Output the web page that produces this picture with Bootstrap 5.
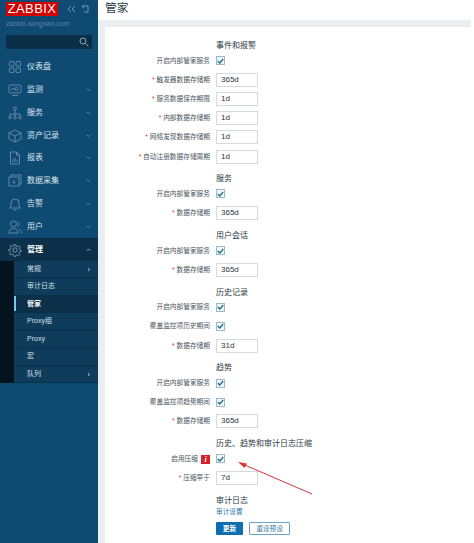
<!DOCTYPE html>
<html lang="zh">
<head>
  <meta charset="UTF-8">
  <title>管家</title>
  <link href="https://cdn.jsdelivr.net/npm/bootstrap@5.3.3/dist/css/bootstrap.min.css" rel="stylesheet">
  <style>
    html, body { height: 100%; overflow: hidden; }
    body {
      background: #ebeef0;
      font-family: "Liberation Sans", "Noto Sans CJK SC", sans-serif;
      font-size: 7px;
      color: #1f2c33;
      position: relative;
    }
    .side-bar { width: 98px; height: 543px; background: #0f4a72; color: #d8e4ec; flex: none; }
    .logo-row { height: 35px; padding: 2px 0 0 6px; }
    .logo-box {
      background: #d40000; color: #fff; width: 52px; height: 14px;
      font-size: 13px; line-height: 14px; text-align: center; letter-spacing: .4px;
    }
    .logo-tools { color: #6f97b2; margin-left: 9px; gap: 5px; }
    .host-name { color: #5a88a7; font-size: 6.8px; margin-top: 3px; height: 10px; line-height: 10px; }
    .search-box { background: #0b2e47; height: 14px; margin: 0 6px; border-radius: 1px; padding-right: 3px; }
    .side-gap { height: 6.800px; }
    .menu-item { height: 22.800px; color: #dbe6ed; font-size: 8px; padding-left: 8px; padding-right: 7px; }
    .menu-item svg.ico { width: 14px; height: 14px; margin-right: 5px; flex: none; stroke-width: .8; }
    .menu-item .chev { margin-left: auto; }
    .menu-open { background: #0c3049; color: #fff; font-weight: 700; }
    .sub-wrap { background: #04141f; padding-left: 14px; }
    .sub-item {
      height: 17.500px; background: #0f3c5b; color: #d5e2ea; font-size: 7px;
      padding: 0 7px 0 13px; border-bottom: 1px solid #0b2f48; position: relative;
    }
    .sub-item .chev { margin-left: auto; }
    .sub-active { background: #0c3049; color: #fff; font-weight: 700; }
    .sub-active::before {
      content: ""; position: absolute; left: 0; top: 0; bottom: 1px; width: 2px; background: #7cc4ee;
    }
    .main-col { border-right: 3px solid #fff; }
    .top-bar { height: 20px; background: #fff; font-size: 11.700px; line-height: 14px; padding: 1px 0 0 7px; color: #2b3a42; }
    .page-body { background: #fff; margin: 7px 0 0 7px; height: 516px; padding-top: 13px; }
    .form-row { display: grid; grid-template-columns: 105px 1fr; column-gap: 6px; align-items: center; height: 19.200px; }
    .form-row.head-row { height: 11px; margin-top: 7.250px; }
    .form-row.head-row:first-child { margin-top: 0; }
    .form-row.link-row { height: 13px; }
    .form-row label { text-align: right; color: #4a565d; font-size: 6.700px; white-space: nowrap; }
    .req { color: #d23c2e; }
    .sect-title { grid-column: 2; font-size: 8px; color: #2b3a42; white-space: nowrap; }
    .val-box {
      width: 42px; height: 14px; border: 1px solid #d5dadd; background: #fff;
      padding-left: 4px; font-size: 8px; line-height: 12px; color: #27343b;
    }
    .tick-box {
      width: 9px; height: 9px; border: 1px solid #9cb9cb; background: #f2f7fa;
      display: flex; align-items: center; justify-content: center;
    }
    .info-flag {
      display: inline-block; width: 9px; height: 9px; background: #d6202c; color: #fff;
      font: italic 700 8px/9px "Liberation Serif", serif; text-align: center; margin-left: 3px; vertical-align: -1px;
    }
    .audit-link { color: #1f78ae; font-size: 6.700px; grid-column: 2; }
    .act-row { grid-column: 2; gap: 6px; }
    .btn.btn-save {
      background: #0f6eb0; border: 0; color: #fff; font-size: 6.700px; line-height: 13.500px; padding: 0;
      width: 27px; height: 13.500px; border-radius: 1px; font-weight: 700;
    }
    .btn.btn-reset {
      background: #fff; border: 1px solid #6ba3c8; color: #3a7aa3; font-size: 6.700px; line-height: 11.500px; padding: 0;
      width: 41px; height: 13.500px; border-radius: 1px;
    }
    .red-arrow { position: absolute; left: 230px; top: 455px; width: 90px; height: 45px; }
  </style>
</head>
<body>
  <div class="d-flex">
    <aside class="side-bar">
      <div class="logo-row">
        <div class="d-flex align-items-center">
          <div class="logo-box">ZABBIX</div>
          <div class="logo-tools d-flex align-items-center">
            <svg width="9" height="8" viewBox="0 0 9 8" fill="none" stroke="currentColor"><path d="M4 1 1 4l3 3M8 1 5 4l3 3"/></svg>
            <svg width="8" height="8" viewBox="0 0 8 8" fill="none" stroke="currentColor"><path d="M2 1h5v6H3M3 0 1 1.500 3 3"/></svg>
          </div>
        </div>
        <div class="host-name">zabbix-songxwn.com</div>
      </div>
      <div class="search-box d-flex align-items-center justify-content-end">
        <svg width="10" height="10" viewBox="0 0 10 10" fill="none" stroke="#8fa9ba"><circle cx="4" cy="4" r="3"/><path d="m6.500 6.500 3 3"/></svg>
      </div>
      <div class="side-gap"></div>
      <div class="menu-item d-flex align-items-center">
        <svg class="ico" viewBox="0 0 14 14" fill="none" stroke="#6f9ab6"><rect x="1.500" y="1.500" width="4.500" height="4.500" rx=".8"/><rect x="8" y="1.500" width="4.500" height="4.500" rx=".8"/><rect x="1.500" y="8" width="4.500" height="4.500" rx=".8"/><rect x="8" y="8" width="4.500" height="4.500" rx=".8"/></svg>仪表盘
      </div>
      <div class="menu-item d-flex align-items-center">
        <svg class="ico" viewBox="0 0 14 14" fill="none" stroke="#6f9ab6"><rect x="1" y="2" width="12" height="8" rx="1"/><path d="M4 12.500h6M3 7l2-2 2 2"/><circle cx="8.500" cy="6" r="1.500"/></svg>监测
        <svg class="chev" width="5" height="4" viewBox="0 0 5 4" fill="none" stroke="#5f8bab"><path d="m1 1 1.500 1.500L4 1"/></svg>
      </div>
      <div class="menu-item d-flex align-items-center">
        <svg class="ico" viewBox="0 0 14 14" fill="none" stroke="#6f9ab6"><circle cx="7" cy="2.500" r="1.500"/><path d="M7 4v4M2 10V8h10v2M7 8v2"/><circle cx="2" cy="11.500" r="1.300"/><circle cx="7" cy="11.500" r="1.300"/><circle cx="12" cy="11.500" r="1.300"/></svg>服务
        <svg class="chev" width="5" height="4" viewBox="0 0 5 4" fill="none" stroke="#5f8bab"><path d="m1 1 1.500 1.500L4 1"/></svg>
      </div>
      <div class="menu-item d-flex align-items-center">
        <svg class="ico" viewBox="0 0 14 14" fill="none" stroke="#6f9ab6"><path d="M7 1 13 4v6l-6 3-6-3V4zM1 4l6 3 6-3M7 7v6"/></svg>资产记录
        <svg class="chev" width="5" height="4" viewBox="0 0 5 4" fill="none" stroke="#5f8bab"><path d="m1 1 1.500 1.500L4 1"/></svg>
      </div>
      <div class="menu-item d-flex align-items-center">
        <svg class="ico" viewBox="0 0 14 14" fill="none" stroke="#6f9ab6"><path d="M2.500 1h6l3 3v9h-9zM8.500 1v3h3M5 11V8M7 11V6.500M9 11V9"/></svg>报表
        <svg class="chev" width="5" height="4" viewBox="0 0 5 4" fill="none" stroke="#5f8bab"><path d="m1 1 1.500 1.500L4 1"/></svg>
      </div>
      <div class="menu-item d-flex align-items-center">
        <svg class="ico" viewBox="0 0 14 14" fill="none" stroke="#6f9ab6"><path d="M3 3V1h10v9h-2"/><rect x="1" y="3" width="10" height="9"/><path d="M6 6v3M4.500 8 6 9.500 7.500 8"/></svg>数据采集
        <svg class="chev" width="5" height="4" viewBox="0 0 5 4" fill="none" stroke="#5f8bab"><path d="m1 1 1.500 1.500L4 1"/></svg>
      </div>
      <div class="menu-item d-flex align-items-center">
        <svg class="ico" viewBox="0 0 14 14" fill="none" stroke="#6f9ab6"><path d="M1.500 11c1.500-1 1.500-2 1.500-5a4 4 0 0 1 8 0c0 3 0 4 1.500 5zM5.500 13h3"/></svg>告警
        <svg class="chev" width="5" height="4" viewBox="0 0 5 4" fill="none" stroke="#5f8bab"><path d="m1 1 1.500 1.500L4 1"/></svg>
      </div>
      <div class="menu-item d-flex align-items-center">
        <svg class="ico" viewBox="0 0 14 14" fill="none" stroke="#6f9ab6"><circle cx="5.500" cy="4" r="3"/><path d="M1 13c0-3 2-4.500 4.500-4.500S10 10 10 13zM9.500 1.500a3 3 0 0 1 0 5M11 9c1.500.5 2.500 2 2.500 4"/></svg>用户
        <svg class="chev" width="5" height="4" viewBox="0 0 5 4" fill="none" stroke="#5f8bab"><path d="m1 1 1.500 1.500L4 1"/></svg>
      </div>
      <div class="menu-item menu-open d-flex align-items-center">
        <svg class="ico" viewBox="0 0 14 14" fill="none" stroke="#8fb2c9"><circle cx="7" cy="7" r="2.200"/><path d="M6 1h2l.4 1.800 1.600.7 1.600-1 1.400 1.400-1 1.600.7 1.600L14 7.500v1l-1.800.4-.7 1.600 1 1.600-1.400 1.400-1.600-1-1.600.7L8 14H6l-.4-1.800-1.600-.7-1.600 1L1 11.100l1-1.600-.7-1.600L0 7.500v-1l1.800-.4.700-1.600-1-1.600L2.900 1.900l1.600 1 1.600-.7z" transform="translate(.7 .7) scale(.9)"/></svg>管理
        <svg class="chev" width="5" height="4" viewBox="0 0 5 4" fill="none" stroke="#a9c2d2"><path d="M1 2.500 2.500 1 4 2.500"/></svg>
      </div>
      <div class="sub-wrap">
        <div class="sub-item d-flex align-items-center">常规<svg class="chev" width="4" height="5" viewBox="0 0 4 5" fill="none" stroke="#a9c2d2"><path d="m1 1 1.500 1.500L1 4"/></svg></div>
        <div class="sub-item d-flex align-items-center">审计日志</div>
        <div class="sub-item sub-active d-flex align-items-center">管家</div>
        <div class="sub-item d-flex align-items-center">Proxy组</div>
        <div class="sub-item d-flex align-items-center">Proxy</div>
        <div class="sub-item d-flex align-items-center">宏</div>
        <div class="sub-item d-flex align-items-center">队列<svg class="chev" width="4" height="5" viewBox="0 0 4 5" fill="none" stroke="#a9c2d2"><path d="m1 1 1.500 1.500L1 4"/></svg></div>
      </div>
    </aside>
    <main class="main-col flex-grow-1">
      <div class="top-bar">管家</div>
      <div class="page-body">
        <div id="form-list"></div>
      </div>
    </main>
  </div>
  <svg class="red-arrow" viewBox="0 0 90 45" fill="none"><path d="M82 39 10 8" stroke="#d8363a" stroke-width="1"/><path d="M8 7 17 8.500 14.500 13z" fill="#d8363a"/></svg>
  <script src="https://cdn.jsdelivr.net/npm/bootstrap@5.3.3/dist/js/bootstrap.bundle.min.js"></script>
  <script>
    const tick = '<span class="tick-box"><svg width="7" height="6" viewBox="0 0 7 6" fill="none" stroke="#0f6e8c" stroke-width="1.200"><path d="m.8 3 2 2L6.200 1"/></svg></span>';
    const ON = '开启内部管家服务';
    const KEEP = '数据存储期';
    // [type, label, value]
    const rows = [
      ['h', '事件和报警'], ['c', ON],
      ['i', '触发器数据存储期', '365d'], ['i', '服务数据保存期限', '1d'], ['i', '内部数据存储期', '1d'],
      ['i', '网络发现数据存储期', '1d'], ['i', '自动注册数据存储周期', '1d'],
      ['h', '服务'], ['c', ON], ['i', KEEP, '365d'],
      ['h', '用户会话'], ['c', ON], ['i', KEEP, '365d'],
      ['h', '历史记录'], ['c', ON], ['c', '覆盖监控项历史期间'], ['i', KEEP, '31d'],
      ['h', '趋势'], ['c', ON], ['c', '覆盖监控项趋势期间'], ['i', KEEP, '365d'],
      ['h', '历史、趋势和审计日志压缩'],
      ['f', '启用压缩'], ['i', '压缩早于', '7d'],
      ['h', '审计日志']
    ];
    let html = '';
    rows.forEach(r => {
      if (r[0] === 'h') html += '<div class="form-row head-row"><span class="sect-title">' + r[1] + '</span></div>';
      if (r[0] === 'c') html += '<div class="form-row"><label>' + r[1] + '</label>' + tick + '</div>';
      if (r[0] === 'f') html += '<div class="form-row"><label>' + r[1] + '<span class="info-flag">i</span></label>' + tick + '</div>';
      if (r[0] === 'i') html += '<div class="form-row"><label><span class="req">*</span> ' + r[1] + '</label><span class="val-box">' + r[2] + '</span></div>';
    });
    html += '<div class="form-row link-row"><a class="audit-link text-decoration-none" href="#">审计设置</a></div>';
    html += '<div class="form-row"><div class="act-row d-flex"><button class="btn btn-save">更新</button><button class="btn btn-reset">重设预设</button></div></div>';
    document.getElementById('form-list').innerHTML = html;
  </script>
</body>
</html>
